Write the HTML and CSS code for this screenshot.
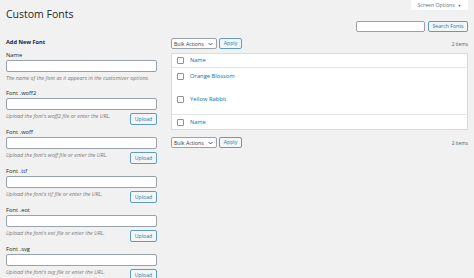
FILE: index.html
```html
<!DOCTYPE html>
<html lang="en">
<head>
<meta charset="utf-8">
<title>Custom Fonts</title>
<link rel="stylesheet" href="styles.css">
</head>
<body>
<div class="page">
  <div class="screen-meta">
    <div class="screen-tab">Screen Options <span class="tab-arrow">&#9660;</span></div>
  </div>
  <h1 class="title">Custom Fonts</h1>
  <div class="search-row">
    <input class="search-input" type="text">
    <button class="btn search-btn">Search Fonts</button>
  </div>
  <div class="cols">
    <div class="col-left">
      <h2 class="form-title">Add New Font</h2>
      <div class="field field-name">
        <label class="label">Name</label>
        <input class="text" type="text">
        <p class="desc">The name of the font as it appears in the customizer options.</p>
      </div>
      <div class="field">
        <label class="label">Font .woff2</label>
        <input class="text" type="text">
        <div class="upload-row"><p class="desc">Upload the font's woff2 file or enter the URL.</p><button class="btn upload-btn">Upload</button></div>
      </div>
      <div class="field">
        <label class="label">Font .woff</label>
        <input class="text" type="text">
        <div class="upload-row"><p class="desc">Upload the font's woff file or enter the URL.</p><button class="btn upload-btn">Upload</button></div>
      </div>
      <div class="field">
        <label class="label">Font .ttf</label>
        <input class="text" type="text">
        <div class="upload-row"><p class="desc">Upload the font's ttf file or enter the URL.</p><button class="btn upload-btn">Upload</button></div>
      </div>
      <div class="field">
        <label class="label">Font .eot</label>
        <input class="text" type="text">
        <div class="upload-row"><p class="desc">Upload the font's eot file or enter the URL.</p><button class="btn upload-btn">Upload</button></div>
      </div>
      <div class="field">
        <label class="label">Font .svg</label>
        <input class="text" type="text">
        <div class="upload-row"><p class="desc">Upload the font's svg file or enter the URL.</p><button class="btn upload-btn">Upload</button></div>
      </div>
    </div>
    <div class="col-right">
      <div class="tablenav">
        <div class="bulk">
          <div class="select">Bulk Actions <svg class="chev" viewBox="0 0 8 5" width="5" height="4"><path d="M1 1l3 3 3-3" fill="none" stroke="#32373c" stroke-width="1.4"/></svg></div>
          <button class="btn apply-btn">Apply</button>
        </div>
        <span class="count">2 items</span>
      </div>
      <div class="table">
        <div class="row head"><span class="cb"></span><a class="link">Name</a></div>
        <div class="row item"><span class="cb"></span><a class="link">Orange Blossom</a></div>
        <div class="row item"><span class="cb"></span><a class="link">Yellow Rabbit</a></div>
        <div class="row foot"><span class="cb"></span><a class="link">Name</a></div>
      </div>
      <div class="tablenav bottom">
        <div class="bulk">
          <div class="select">Bulk Actions <svg class="chev" viewBox="0 0 8 5" width="5" height="4"><path d="M1 1l3 3 3-3" fill="none" stroke="#32373c" stroke-width="1.4"/></svg></div>
          <button class="btn apply-btn">Apply</button>
        </div>
        <span class="count">2 items</span>
      </div>
    </div>
  </div>
</div>
</body>
</html>
```

FILE: styles.css
```css
* { box-sizing: border-box; }
html, body { margin: 0; padding: 0; }
body {
  background: #f1f1f1;
  font-family: "Open Sans", "Noto Sans", "Liberation Sans", sans-serif;
  color: #444;
  width: 474px;
  height: 278px;
  overflow: hidden;
}
.page { padding: 0 6px; }

.screen-meta { display: flex; justify-content: flex-end; height: 10px; }
.screen-tab {
  width: 57px;
  height: 10px;
  background: #fff;
  color: #6b7177;
  font-size: 5.2px;
  display: flex;
  align-items: center;
  justify-content: center;
  gap: 3px;
}
.tab-arrow { font-size: 3.6px; color: #555; }

.title {
  margin: 0;
  font-size: 10.5px;
  line-height: 8px;
  font-weight: 400;
  color: #23282d;
}

.search-row { display: flex; justify-content: flex-end; gap: 3px; margin-top: 3px; height: 11px; }
.search-input {
  width: 69px; height: 11px;
  border: 1px solid #9aa2a9; border-radius: 2px; background: #fff; padding: 0; margin: 0;
}
.btn {
  font-family: inherit;
  height: 11px;
  padding: 0 2px;
  margin: 0;
  border: 1px solid #5f9cc1;
  border-radius: 2px;
  background: #f3f5f6;
  color: #2a7ab0;
  font-size: 5.2px;
  line-height: 9px;
  cursor: pointer;
  white-space: nowrap;
}
.search-btn { width: 40px; }

.cols { display: flex; gap: 14px; margin-top: 6px; }
.col-left { width: 151px; flex: none; }
.col-right { flex: 1; }

.form-title {
  margin: 0 0 6px;
  font-size: 5.6px;
  line-height: 8px;
  font-weight: 700;
  color: #23282d;
}
.field { margin-bottom: 4px; }
.field-name { margin-bottom: 8px; }
.label {
  display: block;
  font-size: 5.8px;
  line-height: 7px;
  color: #23282d;
  margin-bottom: 1px;
}
.text {
  display: block;
  width: 100%;
  height: 12px;
  margin: 0;
  padding: 0;
  border: 1px solid #9aa2a9;
  border-radius: 2px;
  background: #fff;
}
.desc {
  margin: 2px 0 0;
  font-size: 5.35px;
  line-height: 8px;
  font-style: italic;
  color: #777;
  white-space: nowrap;
}
.upload-row { display: flex; justify-content: space-between; align-items: flex-start; margin-top: 3px; }
.upload-row .desc { margin: 0; line-height: 7px; }
.upload-btn { width: 27px; height: 12px; line-height: 10px; }

.tablenav { display: flex; justify-content: space-between; align-items: center; height: 11px; }
.tablenav.bottom { margin-top: 7px; }
.bulk { display: flex; gap: 2px; height: 11px; }
.select {
  width: 46px; height: 11px;
  border: 1px solid #9aa2a9; border-radius: 2px; background: #fff;
  color: #32373c; font-size: 5.2px;
  display: flex; align-items: center; justify-content: space-between;
  padding: 0 3px 0 2px;
}
.chev { display: block; }
.apply-btn { width: 23px; }
.count { font-size: 4.8px; color: #555d66; }

.table {
  margin-top: 4px;
  background: #fff;
  border: 1px solid #d9dcdf;
}
.row { display: flex; align-items: center; gap: 6px; padding-left: 5px; }
.row.head { height: 14px; border-bottom: 1px solid #e2e4e7; }
.row.item { height: 23px; align-items: flex-start; padding-top: 5px; }
.row.foot { height: 15px; border-top: 1px solid #e2e4e7; }
.cb {
  width: 7px; height: 7px; flex: none;
  border: 1px solid #8c9399; border-radius: 1px; background: #fff;
}
.link { color: #0073aa; font-size: 5.6px; text-decoration: none; line-height: 7px; }
.row.item .link { font-size: 5.8px; }
```
